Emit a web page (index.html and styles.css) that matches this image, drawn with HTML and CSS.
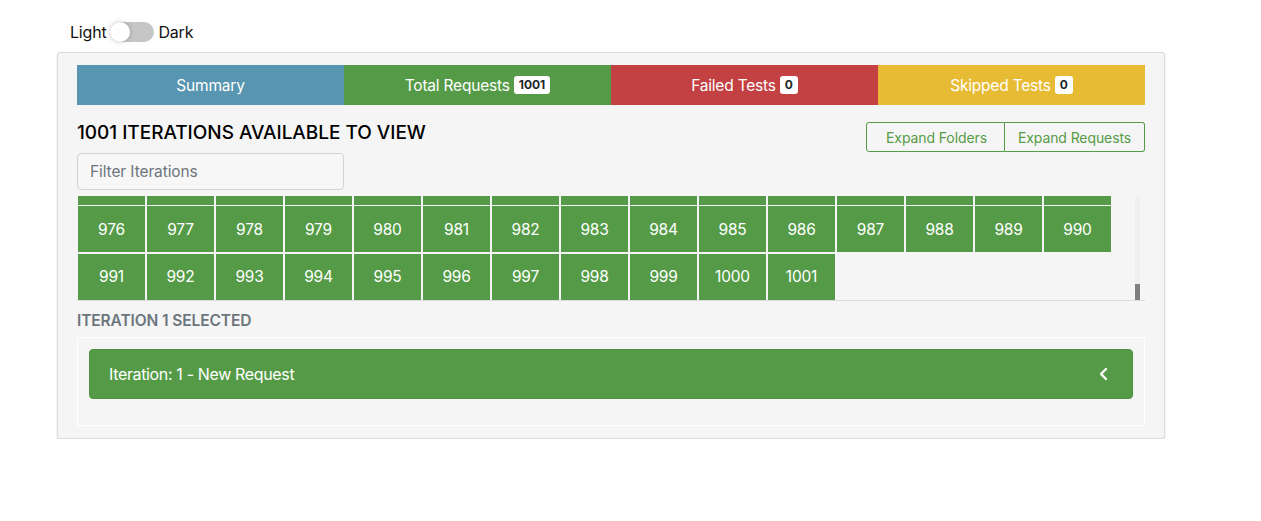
FILE: index.html
```html
<!DOCTYPE html>
<html>
<head>
<meta charset="utf-8">
<link rel="stylesheet" href="styles.css">
</head>
<body>
<div class="page">
  <div class="theme-toggle">
    <span>Light</span>
    <span class="switch"><span class="knob"></span></span>
    <span>Dark</span>
  </div>
  <div class="card">
    <div class="tabs">
      <div class="tab tab-summary">Summary</div>
      <div class="tab tab-total">Total Requests <span class="badge">1001</span></div>
      <div class="tab tab-failed">Failed Tests <span class="badge">0</span></div>
      <div class="tab tab-skipped">Skipped Tests <span class="badge">0</span></div>
    </div>
    <div class="head-row">
      <div class="head-left">
        <h2 class="title">1001 ITERATIONS AVAILABLE TO VIEW</h2>
        <input class="filter" type="text" placeholder="Filter Iterations">
      </div>
      <div class="btn-group">
        <button class="btn">Expand Folders</button>
        <button class="btn">Expand Requests</button>
      </div>
    </div>
    <div class="iter-scroll">
      <div class="iter-grid">
        <div class="cell"></div><div class="cell"></div><div class="cell"></div><div class="cell"></div><div class="cell"></div><div class="cell"></div><div class="cell"></div><div class="cell"></div><div class="cell"></div><div class="cell"></div><div class="cell"></div><div class="cell"></div><div class="cell"></div><div class="cell"></div><div class="cell"></div>
        <div class="cell">976</div><div class="cell">977</div><div class="cell">978</div><div class="cell">979</div><div class="cell">980</div><div class="cell">981</div><div class="cell">982</div><div class="cell">983</div><div class="cell">984</div><div class="cell">985</div><div class="cell">986</div><div class="cell">987</div><div class="cell">988</div><div class="cell">989</div><div class="cell">990</div>
        <div class="cell">991</div><div class="cell">992</div><div class="cell">993</div><div class="cell">994</div><div class="cell">995</div><div class="cell">996</div><div class="cell">997</div><div class="cell">998</div><div class="cell">999</div><div class="cell">1000</div><div class="cell">1001</div>
      </div>
      <div class="scrollbar"><div class="thumb"></div></div>
    </div>
    <div class="selected-label">ITERATION 1 SELECTED</div>
    <div class="selected-box">
      <div class="iter-bar">
        <span>Iteration: 1 - New Request</span>
        <svg class="chev" width="12" height="14" viewBox="0 0 12 14"><polyline points="8,2 3,7 8,12" fill="none" stroke="#fff" stroke-width="2.4" stroke-linecap="round" stroke-linejoin="round"/></svg>
      </div>
    </div>
  </div>
</div>
</body>
</html>
```

FILE: styles.css
```css
* { box-sizing: border-box; }
body {
  margin: 0;
  background: #fff;
  font-family: Inter, "Liberation Sans", sans-serif;
  color: #212529;
}
.page {
  padding: 20px 0 0 57px;
  width: 1165px;
}
.theme-toggle {
  display: flex;
  align-items: center;
  gap: 4px;
  font-size: 16px;
  letter-spacing: -0.2px;
  margin-left: 13px;
  height: 24px;
  color: #111;
}
.switch {
  position: relative;
  width: 44px;
  height: 20px;
  border-radius: 10px;
  background: #c6c6c6;
  display: inline-block;
}
.knob {
  position: absolute;
  left: 0;
  top: 0;
  width: 20px;
  height: 20px;
  border-radius: 50%;
  background: #fff;
  box-shadow: 0 0 5px rgba(0,0,0,0.22);
}
.card {
  margin-top: 8px;
  width: 1108px;
  background: #f5f5f5;
  border: 1px solid #dcdcdc;
  border-radius: 3px;
  box-shadow: 0 1px 2px rgba(0,0,0,0.15);
  padding: 12px 19px 12px 19px;
}
.tabs {
  display: flex;
  height: 40px;
}
.tab {
  flex: 1;
  display: flex;
  align-items: center;
  justify-content: center;
  color: #fff;
  font-size: 15.5px;
  gap: 4px;
  letter-spacing: -0.2px;
}
.tab-summary { background: #5795b0; }
.tab-total { background: #559b47; }
.tab-failed { background: #c34143; }
.tab-skipped { background: #e8bb35; }
.badge {
  background: #fff;
  color: #212529;
  font-size: 12px;
  font-weight: 700;
  border-radius: 3px;
  padding: 2px 5px;
  line-height: 14px;
  letter-spacing: 0;
}
.head-row {
  display: flex;
  justify-content: space-between;
  align-items: flex-start;
  margin-top: 17px;
}
.title {
  margin: 0;
  font-size: 19px;
  font-weight: 500;
  line-height: 22px;
  color: #000;
  letter-spacing: -0.03px;
}
.filter {
  display: block;
  margin-top: 9px;
  width: 267px;
  height: 37px;
  border: 1px solid #cfd3d8;
  border-radius: 4px;
  background: #f7f7f7;
  padding: 0 12px;
  font-family: inherit;
  font-size: 15.5px;
  color: #495057;
  letter-spacing: -0.1px;
}
.filter::placeholder { color: #6c757d; }
.btn-group {
  display: flex;
  margin-top: 0;
}
.btn {
  height: 30px;
  background: transparent;
  border: 1px solid #559b47;
  color: #559b47;
  font-family: inherit;
  font-size: 14px;
  letter-spacing: -0.1px;
  padding: 0 0 0 2px;
}
.btn:first-child { border-radius: 3px 0 0 3px; width: 139px; }
.btn:last-child { border-radius: 0 3px 3px 0; border-left: none; width: 140px; padding: 0; }
.iter-scroll {
  position: relative;
  margin-top: 6px;
  height: 105px;
  overflow: hidden;
  display: flex;
  flex-direction: column;
  justify-content: flex-end;
  border-bottom: 1px solid #dadce0;
}
.iter-grid {
  display: grid;
  grid-template-columns: repeat(15, 67px);
  grid-auto-rows: 46px;
  column-gap: 2px;
  row-gap: 1.5px;
  padding-left: 1px;
  margin-bottom: 0.5px;
}
.cell {
  background: #559b47;
  color: #fff;
  font-size: 15.5px;
  letter-spacing: -0.2px;
  display: flex;
  align-items: center;
  justify-content: center;
}
.scrollbar {
  position: absolute;
  right: 5px;
  top: 0;
  bottom: 0;
  width: 5px;
  background: #efefef;
}
.thumb {
  position: absolute;
  left: 0;
  right: 0;
  bottom: 0;
  height: 16px;
  background: #7f7f7f;
}
.selected-label {
  margin-top: 11px;
  font-size: 15.5px;
  font-weight: 600;
  color: #6c757d;
  line-height: 18px;
  letter-spacing: -0.1px;
}
.selected-box {
  margin-top: 7px;
  border: 1px solid #fff;
  padding: 11px 11px 26px 11px;
}
.iter-bar {
  height: 50px;
  background: #559b47;
  border: 1px solid #4f9142;
  border-radius: 4px;
  display: flex;
  align-items: center;
  justify-content: space-between;
  padding: 0 22px 0 19px;
  color: #fff;
  font-size: 16px;
  letter-spacing: -0.35px;
}
.chev { display: block; }
```
